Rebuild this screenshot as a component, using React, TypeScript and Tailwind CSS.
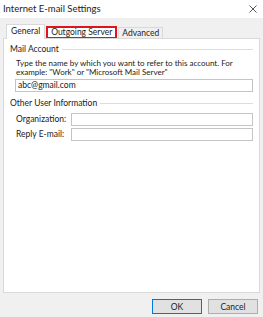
import React from 'react';

const font = { fontFamily: 'Lato, "Liberation Sans", sans-serif' };

const Field: React.FC<{ label: string }> = ({ label }) => (
  <div className="flex items-center h-[13px]">
    <span className="w-[55px] text-[8.5px] text-[#222]">{label}</span>
    <div className="flex-1 h-[13px] bg-white border border-[#c4c4c4]" />
  </div>
);

const App: React.FC = () => {
  return (
    <div className="w-[263px] h-[317px] bg-[#f0f0f0] flex flex-col overflow-hidden" style={font}>
      <div className="h-[18px] bg-white flex items-center justify-between pl-[3px] pr-[6px]">
        <span className="text-[9.5px] text-[#222]">Internet E-mail Settings</span>
        <svg width="8" height="8" viewBox="0 0 8 8">
          <path d="M0.5 0.5 L7.5 7.5 M7.5 0.5 L0.5 7.5" stroke="#444" strokeWidth="0.9" />
        </svg>
      </div>

      <div className="flex items-end h-[20px] pl-[6px] mt-[1px]">
        <div className="relative z-10 h-[15px] px-[4px] bg-white border border-b-0 border-[#d9d9d9] text-[8.5px] text-[#222] leading-[12px]">
          General
        </div>
        <div className="h-[13px] px-[3px] ml-[1px] border-2 border-[#e0141e] bg-white text-[8.5px] text-[#222] flex items-center">
          Outgoing Server
        </div>
        <div className="h-[12px] px-[3px] ml-[1px] bg-[#f0f0f0] border border-b-0 border-[#d9d9d9] text-[8.5px] text-[#222] leading-[11px]">
          Advanced
        </div>
      </div>

      <div className="mx-[3px] -mt-[1px] h-[255px] bg-white border border-[#d9d9d9] px-[6px] pt-[4px]">
        <div className="flex items-center gap-[3px]">
          <span className="text-[8.5px] text-[#222] whitespace-nowrap">Mail Account</span>
          <div className="flex-1 h-px bg-[#dcdcdc]" />
        </div>
        <p className="mt-[3px] ml-[6px] whitespace-nowrap text-[8px] leading-[9px] text-[#222]">
          Type the name by which you want to refer to this account. For
          <br />
          example: "Work" or "Microsoft Mail Server"
        </p>
        <div className="mt-[2px] ml-[5px] h-[13px] border border-[#c4c4c4] text-[8.5px] leading-[11px] pl-[2px] text-[#222]">
          abc@gmail.com
        </div>

        <div className="flex items-center gap-[3px] mt-[5px]">
          <span className="text-[8.5px] text-[#222] whitespace-nowrap">Other User Information</span>
          <div className="flex-1 h-px bg-[#dcdcdc]" />
        </div>
        <div className="ml-[6px] mt-[3px] flex flex-col gap-[2px]">
          <Field label="Organization:" />
          <Field label="Reply E-mail:" />
        </div>
      </div>

      <div className="flex justify-end gap-[6px] pr-[5px] mt-[6px]">
        <button className="w-[50px] h-[15px] bg-[#e1e1e1] border border-[#0078d7] text-[8.5px] leading-[12px] text-[#222]">
          OK
        </button>
        <button className="w-[50px] h-[15px] bg-[#e1e1e1] border border-[#adadad] text-[8.5px] leading-[12px] text-[#222]">
          Cancel
        </button>
      </div>
    </div>
  );
};

export default App;
